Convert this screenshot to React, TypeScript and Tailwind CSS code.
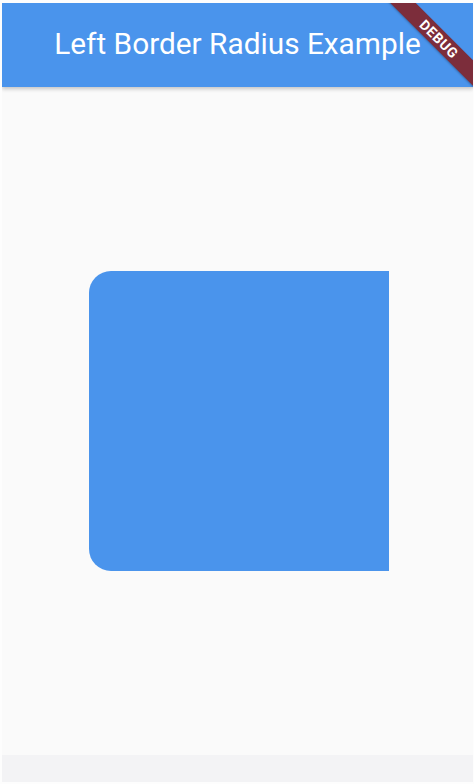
export default function App() {
  return (
    <div className="w-[474px] h-[784px] bg-[#fdfdfd] pt-[3px] pl-[2px] pr-[1px] pb-[2px] overflow-hidden">
      <div className="relative flex flex-col h-full overflow-hidden bg-[#fafafa]">
        <header className="relative z-10 h-[84px] shrink-0 bg-[#4a94ec] shadow-[0_2px_4px_rgba(0,0,0,0.22)] flex items-center justify-center">
          <h1 className="text-white text-[29.8px] font-normal font-['Roboto',sans-serif] leading-none pb-[3px]">
            Left Border Radius Example
          </h1>
        </header>

        <main className="flex-1 flex items-center justify-center">
          <div className="w-[300px] h-[300px] bg-[#4a94ec] rounded-l-[22px] translate-x-[1px]" />
        </main>

        <footer className="h-[27px] shrink-0 bg-[#f3f3f5]" />

        <div className="absolute z-20 left-[357px] top-[27px] w-[160px] h-[18px] rotate-45 bg-[#7c2d3b] flex items-center justify-center shadow-[0_1px_2px_rgba(0,0,0,0.25)]">
          <span className="text-white text-[14px] font-bold font-['Roboto',sans-serif] tracking-[0.6px] leading-none">
            DEBUG
          </span>
        </div>
      </div>
    </div>
  );
}
